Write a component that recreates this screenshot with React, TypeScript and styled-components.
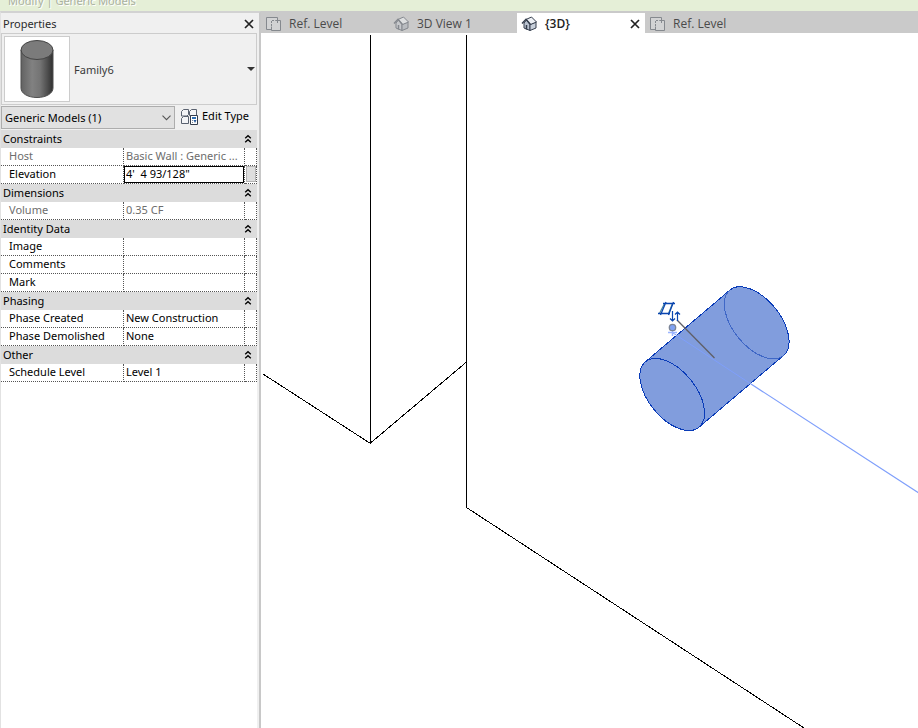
import React, { useState } from "react";
import styled, { createGlobalStyle, css } from "styled-components";

const GlobalStyle = createGlobalStyle`
  *, *::before, *::after { box-sizing: border-box; }
  html, body, #root { height: 100%; margin: 0; }
  body {
    background: #ffffff;
    color: #000000;
    font-family: "Noto Sans", "Open Sans", sans-serif;
    font-size: 11px;
    line-height: 16px;
    overflow: hidden;
  }
  button, input, select { font: inherit; color: inherit; margin: 0; border-radius: 0; }
`;

const Shell = styled.div`
  display: flex;
  flex-direction: column;
  height: 100vh;
`;

const Ribbon = styled.header`
  display: flex;
  align-items: flex-end;
  flex: none;
  height: 11px;
  padding: 0 8px 2px;
  overflow: hidden;
  background: #e5efd7;
  color: #a9b0a0;
  text-shadow: 1px 1px 0 #ffffff;
  white-space: nowrap;
`;

const Workspace = styled.div`
  display: flex;
  flex: 1;
  min-height: 0;
`;

const Panel = styled.aside`
  display: flex;
  flex-direction: column;
  flex: none;
  width: 261px;
  padding-right: 2px;
  border-top: 2px solid #d2d2d2;
  border-left: 1px solid #e2e2e2;
  border-right: 2px solid #c8c8c8;
  background: #f0f0f0;
`;

const PanelTitle = styled.div`
  display: flex;
  align-items: center;
  justify-content: space-between;
  height: 20px;
  padding: 2px 2px 0;
  color: #2b2b2b;
`;

const PlainButton = styled.button`
  display: inline-flex;
  align-items: center;
  justify-content: center;
  padding: 0;
  border: 0;
  background: transparent;
`;

const FamilyPicker = styled.button`
  display: flex;
  align-items: center;
  gap: 4px;
  height: 72px;
  padding: 2px 1px 2px 2px;
  border: 1px solid #cccccc;
  background: #f0f0f0;
  color: #3a3a3a;
  text-align: left;
`;

const Thumbnail = styled.span`
  display: flex;
  align-items: center;
  justify-content: center;
  width: 66px;
  height: 66px;
  border: 1px solid #cccccc;
  background: #ffffff;
`;

const FamilyName = styled.span`
  flex: 1;
  padding-top: 2px;
`;

const FilterRow = styled.div`
  display: flex;
  align-items: flex-start;
  height: 25px;
  gap: 6px;
  padding: 1px 0;
`;

const SelectWrap = styled.label`
  display: grid;
  width: 174px;
  height: 23px;
  align-items: center;

  > * { grid-area: 1 / 1; }
  > svg { justify-self: end; margin-right: 4px; pointer-events: none; }
`;

const FilterSelect = styled.select`
  appearance: none;
  width: 100%;
  height: 23px;
  padding: 0 20px 0 3px;
  border: 1px solid #adadad;
  background: #e1e1e1;
`;

const EditTypeButton = styled(PlainButton)`
  gap: 4px;
  height: 20px;
  white-space: nowrap;
`;

const Sheet = styled.div`
  flex: 1;
  min-height: 0;
  background: #ffffff;
`;

const PropertyTable = styled.table`
  width: 100%;
  table-layout: fixed;
  border-collapse: separate;
  border-spacing: 0;
  background: #ffffff;
`;

const NameCol = styled.col` width: 123px; `;
const ActionCol = styled.col` width: 12px; `;

const GroupCell = styled.th`
  height: 18px;
  padding: 0;
  background: #dcdcdc;
  font-weight: 400;
  text-align: left;
`;

const GroupLine = styled.div`
  display: flex;
  align-items: center;
  justify-content: space-between;
  height: 18px;
  padding: 0 5px 0 2px;
`;

const cell = css`
  height: 18px;
  padding: 0 2px;
  border-right: 1px dotted #555555;
  border-bottom: 1px dotted #555555;
  font-weight: 400;
  line-height: 16px;
  text-align: left;
  vertical-align: top;
  white-space: nowrap;
`;

const NameCell = styled.th<{ $muted?: boolean }>`
  ${cell}
  padding-left: 8px;
  color: ${(p) => (p.$muted ? "#6d6d6d" : "#000000")};
`;

const ValueCell = styled.td<{ $muted?: boolean; $editing?: boolean }>`
  ${cell}
  padding: ${(p) => (p.$editing ? "0" : "0 2px")};
  color: ${(p) => (p.$muted ? "#6d6d6d" : "#000000")};
`;

const ActionCell = styled.td`
  ${cell}
  padding: 0;
`;

const ValueInput = styled.input`
  display: block;
  width: 100%;
  height: 17px;
  padding: 0 1px 2px;
  border: 1px solid #000000;
  outline: none;
  background: #ffffff;
  line-height: 13px;
  white-space: pre;
`;

const AssociateButton = styled.button`
  display: block;
  width: 10px;
  height: 16px;
  margin-left: 1px;
  padding: 0;
  border: 1px solid #b4b4b4;
  background: #dedede;
`;

const ViewArea = styled.main`
  display: flex;
  flex-direction: column;
  flex: 1;
  min-width: 0;
`;

const TabStrip = styled.nav`
  display: flex;
  flex: none;
  height: 22px;
  padding-top: 2px;
  background: #cacaca;
  font-family: "Open Sans", "Noto Sans", sans-serif;
  font-size: 12px;
`;

const ViewTab = styled.div<{ $active?: boolean }>`
  display: flex;
  align-items: center;
  width: 128px;
  padding: 2px 4px 0;
  background: ${(p) => (p.$active ? "#ffffff" : "transparent")};
  color: ${(p) => (p.$active ? "#222222" : "#4a4a4a")};
  font-weight: ${(p) => (p.$active ? 600 : 400)};
`;

const TabButton = styled(PlainButton)`
  flex: 1;
  justify-content: flex-start;
  gap: 6px;
  height: 18px;
`;

const Drawing = styled.svg`
  display: block;
  flex: 1;
  width: 100%;
  min-height: 0;
  background: #ffffff;
`;

const Cross = () => (
  <svg width="12" height="12" viewBox="0 0 12 12" aria-hidden="true">
    <path d="M2 2l8 8M10 2l-8 8" stroke="#222" strokeWidth="1.7" fill="none" />
  </svg>
);

const DoubleChevron = () => (
  <svg width="8" height="10" viewBox="0 0 8 10" aria-hidden="true">
    <path d="M1.2 4.3L4 1.7l2.8 2.6M1.2 8.3L4 5.7l2.8 2.6" stroke="#000" strokeWidth="1.3" fill="none" />
  </svg>
);

const FamilyThumb = () => (
  <svg width="36" height="60" viewBox="0 0 36 60" aria-hidden="true">
    <defs>
      <linearGradient id="side" x1="0" x2="1" y1="0" y2="0">
        <stop offset="0" stopColor="#626262" />
        <stop offset="0.35" stopColor="#818181" />
        <stop offset="0.6" stopColor="#747474" />
        <stop offset="0.85" stopColor="#4a4a4a" />
        <stop offset="1" stopColor="#2f2f2f" />
      </linearGradient>
    </defs>
    <path d="M2 11v38c0 5.500 7 9.500 16 9.500s16-4 16-9.500V11z" fill="url(#side)" stroke="#4e4e4e" strokeWidth="1" />
    <ellipse cx="18" cy="11" rx="16" ry="9.500" fill="#7b7b7b" stroke="#444" strokeWidth="1" />
  </svg>
);

const EditTypeIcon = () => (
  <svg width="17" height="17" viewBox="0 0 17 17" aria-hidden="true">
    <g fill="#f3f4f6" stroke="#59616f" strokeWidth="1">
      <path d="M0.500 3.500l2-2h5v5l-1.500 1.500h-5.500z" />
      <path d="M8.500 3.500l2-2h5v6h-7z" />
      <path d="M0.500 10.500l2-2h5v7h-7z" />
    </g>
    <path d="M9.500 7.500h7v9h-7z" fill="#ffffff" stroke="#343d4c" />
    <path d="M11 9h4v2h-4z" fill="#2d6fb5" />
    <path d="M11 12.500h1M11 14.500h1" stroke="#7a8596" />
    <path d="M12.500 12h3l-1.500 3z" fill="#25589b" />
  </svg>
);

const PlanIcon = () => (
  <svg width="18" height="16" viewBox="0 0 18 16" aria-hidden="true">
    <path d="M1.500 1.500h11v3h3v10h-9v-1h-5z" fill="#d2d3d4" />
    <path d="M6.500 13.500h-5v-12h11v3M10.500 4.500h5v10h-9v-4" fill="none" stroke="#85898e" />
    <path d="M6.500 10v-5.500h4" fill="none" stroke="#85898e" strokeDasharray="2 1" />
    <path d="M12.500 4v3" stroke="#85898e" />
  </svg>
);

const HouseIcon = ({ active }: { active?: boolean }) => {
  const ink = active ? "#343d4c" : "#84888e";
  return (
    <svg width="18" height="16" viewBox="0 0 18 16" aria-hidden="true">
      <path d="M3 7l2.500-3L9 8.500v6l-6-2.500z" fill={active ? "#b9c2d0" : "#c6c8cb"} stroke={ink} />
      <path d="M9 8.500l6-2.500v6l-6 2.500z" fill={active ? "#c7cfda" : "#b9bcc0"} stroke={ink} />
      <path d="M5 3.500L10.500 1l5 5-6 2.500z" fill={active ? "#edf0f4" : "#dddfe0"} stroke={ink} />
      <path d="M1 7.500L5 3.200l4.500 5.300" fill="none" stroke={ink} strokeWidth="1.400" />
      <path d="M5.500 9v4.500" stroke={ink} strokeWidth="1.500" />
    </svg>
  );
};

type Property = { name: string; value: string; muted?: boolean; editable?: boolean };
type Group = { title: string; rows: Property[] };

const groups: Group[] = [
  {
    title: "Constraints",
    rows: [
      { name: "Host", value: "Basic Wall : Generic ...", muted: true },
      { name: "Elevation", value: "4'  4 93/128\"", editable: true },
    ],
  },
  { title: "Dimensions", rows: [{ name: "Volume", value: "0.35 CF", muted: true }] },
  {
    title: "Identity Data",
    rows: [
      { name: "Image", value: "" },
      { name: "Comments", value: "" },
      { name: "Mark", value: "" },
    ],
  },
  {
    title: "Phasing",
    rows: [
      { name: "Phase Created", value: "New Construction" },
      { name: "Phase Demolished", value: "None" },
    ],
  },
  { title: "Other", rows: [{ name: "Schedule Level", value: "Level 1" }] },
];

const tabs = [
  { label: "Ref. Level", plan: true },
  { label: "3D View 1" },
  { label: "{3D}", active: true },
  { label: "Ref. Level", plan: true },
];

function PropertyRow({ name, value, muted, editable }: Property) {
  const [text, setText] = useState(value);
  return (
    <tr>
      <NameCell scope="row" $muted={muted}>{name}</NameCell>
      <ValueCell $muted={muted} $editing={editable}>
        {editable ? (
          <ValueInput aria-label={name} value={text} onChange={(e) => setText(e.target.value)} />
        ) : (
          value
        )}
      </ValueCell>
      <ActionCell>
        {editable && <AssociateButton type="button" aria-label="Associate family parameter" />}
      </ActionCell>
    </tr>
  );
}

function PropertyGroup({ title, rows }: Group) {
  const [open, setOpen] = useState(true);
  return (
    <tbody>
      <tr>
        <GroupCell colSpan={3} scope="rowgroup">
          <GroupLine>
            {title}
            <PlainButton type="button" aria-label={`Toggle ${title}`} aria-expanded={open} onClick={() => setOpen(!open)}>
              <DoubleChevron />
            </PlainButton>
          </GroupLine>
        </GroupCell>
      </tr>
      {open && rows.map((row) => <PropertyRow key={row.name} {...row} />)}
    </tbody>
  );
}

function Model() {
  return (
    <Drawing role="img" aria-label="3D view of a selected cylinder and wall edges">
      <g transform="translate(-261 -33)" fill="none">
        <g stroke="#000" strokeWidth="1" shapeRendering="crispEdges">
          <path d="M370.500 35V443L466.500 362" />
          <path d="M263 374L370.500 443.500" />
          <path d="M466.500 35V507.500L804 728L1800 1379" />
        </g>
        <path
          d="M645.300 361.900L729.800 290.200A42.200 23.600 50.900 0 1 783.600 355.400L699.100 427.100A42.200 23.600 50.900 0 1 645.300 361.900Z"
          fill="#819ddd"
          stroke="#0a3cb8"
          shapeRendering="crispEdges"
        />
        <g shapeRendering="crispEdges">
          <path d="M729.800 290.200A42.200 23.600 50.900 0 0 783.600 355.400" stroke="#3f67c6" />
          <path d="M645.300 361.900A42.200 23.600 50.900 0 1 699.100 427.100" stroke="#0a3cb8" />
        </g>
        <path d="M673 333L751 384" stroke="#7f9ffb" />
        <path d="M751 384L918 492.500L1800 1067" stroke="#7f9ffb" strokeWidth="1.200" />
        <path d="M677 320L714.500 358" stroke="#5f5f66" strokeWidth="1.300" />
        <path d="M664.500 303.500h8l-4 10h-9z" fill="#ffffff" stroke="#4f8a9c" strokeWidth="1.200" />
        <path d="M663 303.500h12M658 313.500h12M666 302l-5.500 13M673.500 302l-5 13" stroke="#0a46b0" strokeWidth="1.300" />
        <path d="M672.500 311v10M670 318.500l2.500 2.500 2.500-2.500M677.500 321v-9M675 314.500l2.500-2.500 2.500 2.500" stroke="#0a46b0" strokeWidth="1.200" />
        <path d="M668 332.500h9M672.500 331v5" stroke="#9bb5ff" strokeWidth="1.500" />
        <circle cx="672.500" cy="327.500" r="3.200" fill="#7fa2f3" stroke="#7c8598" strokeWidth="1.300" />
      </g>
    </Drawing>
  );
}

export default function App() {
  return (
    <>
      <GlobalStyle />
      <Shell>
        <Ribbon>Modify | Generic Models</Ribbon>
        <Workspace>
          <Panel>
            <PanelTitle>
              Properties
              <PlainButton type="button" aria-label="Close properties"><Cross /></PlainButton>
            </PanelTitle>
            <FamilyPicker type="button">
              <Thumbnail><FamilyThumb /></Thumbnail>
              <FamilyName>Family6</FamilyName>
              <svg width="8" height="4" viewBox="0 0 8 4" aria-hidden="true"><path d="M0 0h8l-4 4z" fill="#333" /></svg>
            </FamilyPicker>
            <FilterRow>
              <SelectWrap>
                <FilterSelect aria-label="Properties filter" defaultValue="generic">
                  <option value="generic">Generic Models (1)</option>
                </FilterSelect>
                <svg width="9" height="6" viewBox="0 0 9 6" aria-hidden="true">
                  <path d="M0.500 0.700l4 4 4-4" fill="none" stroke="#555" strokeWidth="1.100" />
                </svg>
              </SelectWrap>
              <EditTypeButton type="button"><EditTypeIcon />Edit Type</EditTypeButton>
            </FilterRow>
            <Sheet>
              <PropertyTable>
                <colgroup><NameCol /><col /><ActionCol /></colgroup>
                {groups.map((g) => <PropertyGroup key={g.title} {...g} />)}
              </PropertyTable>
            </Sheet>
          </Panel>
          <ViewArea>
            <TabStrip aria-label="Open views">
              {tabs.map((t, i) => (
                <ViewTab key={i} $active={t.active}>
                  <TabButton type="button">
                    {t.plan ? <PlanIcon /> : <HouseIcon active={t.active} />}
                    {t.label}
                  </TabButton>
                  {t.active && <PlainButton type="button" aria-label="Close view"><Cross /></PlainButton>}
                </ViewTab>
              ))}
            </TabStrip>
            <Model />
          </ViewArea>
        </Workspace>
      </Shell>
    </>
  );
}
